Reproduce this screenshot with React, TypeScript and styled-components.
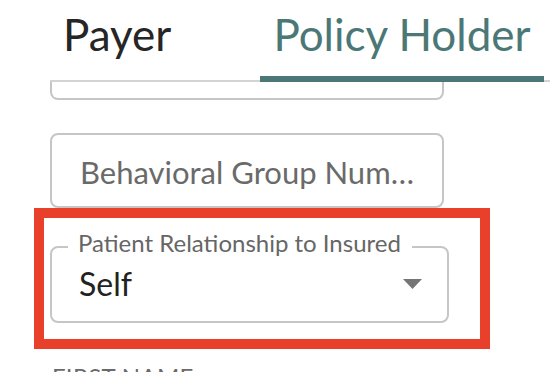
import React from "react";
import styled, { createGlobalStyle } from "styled-components";

const GlobalStyle = createGlobalStyle`
  html, body {
    margin: 0;
    padding: 0;
    background: #ffffff;
    font-family: Lato, "Open Sans", sans-serif;
    overflow: hidden;
  }
`;

const Screen = styled.div`
  width: 550px;
  height: 372px;
  overflow: hidden;
  background: #ffffff;
`;

const TabBar = styled.div`
  display: flex;
  gap: 76px;
  height: 82px;
  box-sizing: border-box;
  margin-left: 50px;
  border-bottom: 2px solid #d2d4d4;
`;

const Tab = styled.div<{ $active?: boolean }>`
  box-sizing: border-box;
  height: 82px;
  margin-bottom: -2px;
  padding: 8px 13px 0;
  border-bottom: 6px solid ${(p) => (p.$active ? "#4b7876" : "transparent")};
  font-size: 44px;
  line-height: 1.2;
  color: ${(p) => (p.$active ? "#4b7876" : "#262626")};
  white-space: nowrap;
`;

const Form = styled.div`
  display: flex;
  flex-direction: column;
  padding-left: 50px;
  width: 399px;
`;

const ClippedField = styled.div`
  width: 394px;
  height: 18px;
  box-sizing: border-box;
  border: 2px solid #c6c6c6;
  border-top: none;
  border-radius: 0 0 8px 8px;
`;

const TextField = styled.div`
  display: flex;
  align-items: center;
  width: 394px;
  height: 75px;
  box-sizing: border-box;
  margin-top: 33px;
  padding: 4px 22px 0 28px;
  border: 2px solid #c6c6c6;
  border-radius: 8px;
`;

const Placeholder = styled.span`
  font-size: 31px;
  line-height: 1.2;
  color: #6a6a6a;
  white-space: nowrap;
  overflow: hidden;
  text-overflow: ellipsis;
`;

const Highlight = styled.div`
  width: 456px;
  margin-left: -16px;
  padding: 13px 0 16px 6px;
  box-sizing: border-box;
  border: 10px solid #e8402a;
`;

const SelectBox = styled.fieldset`
  width: 399px;
  box-sizing: border-box;
  margin: 0;
  padding: 2px 16px 18px;
  border: 2px solid #c6c6c6;
  border-radius: 8px;
  min-inline-size: 0;
`;

const SelectLabel = styled.legend`
  padding: 0 11px 8px 10px;
  font-size: 24px;
  line-height: 24px;
  color: #666666;
  white-space: nowrap;
`;

const ValueRow = styled.div`
  display: flex;
  align-items: center;
  justify-content: space-between;
  padding: 0 9px 0 11px;
`;

const Value = styled.span`
  font-size: 32px;
  line-height: 1.2;
  color: #222222;
`;

const Arrow = styled.svg`
  width: 19px;
  height: 10px;
  flex-shrink: 0;
`;

const SectionTitle = styled.div`
  margin-top: 16px;
  margin-left: 2px;
  font-size: 24px;
  line-height: 1;
  letter-spacing: 0.3px;
  text-transform: uppercase;
  color: #6a6a6a;
`;

const App: React.FC = () => {
  return (
    <Screen>
      <GlobalStyle />
      <TabBar>
        <Tab>Payer</Tab>
        <Tab $active>Policy Holder</Tab>
      </TabBar>
      <Form>
        <ClippedField />
        <TextField>
          <Placeholder>Behavioral Group Number</Placeholder>
        </TextField>
        <Highlight>
          <SelectBox>
            <SelectLabel>Patient Relationship to Insured</SelectLabel>
            <ValueRow>
              <Value>Self</Value>
              <Arrow viewBox="0 0 19 10">
                <path d="M0 0 L19 0 L9.5 10 Z" fill="#757575" />
              </Arrow>
            </ValueRow>
          </SelectBox>
        </Highlight>
        <SectionTitle>First name</SectionTitle>
      </Form>
    </Screen>
  );
};

export default App;
